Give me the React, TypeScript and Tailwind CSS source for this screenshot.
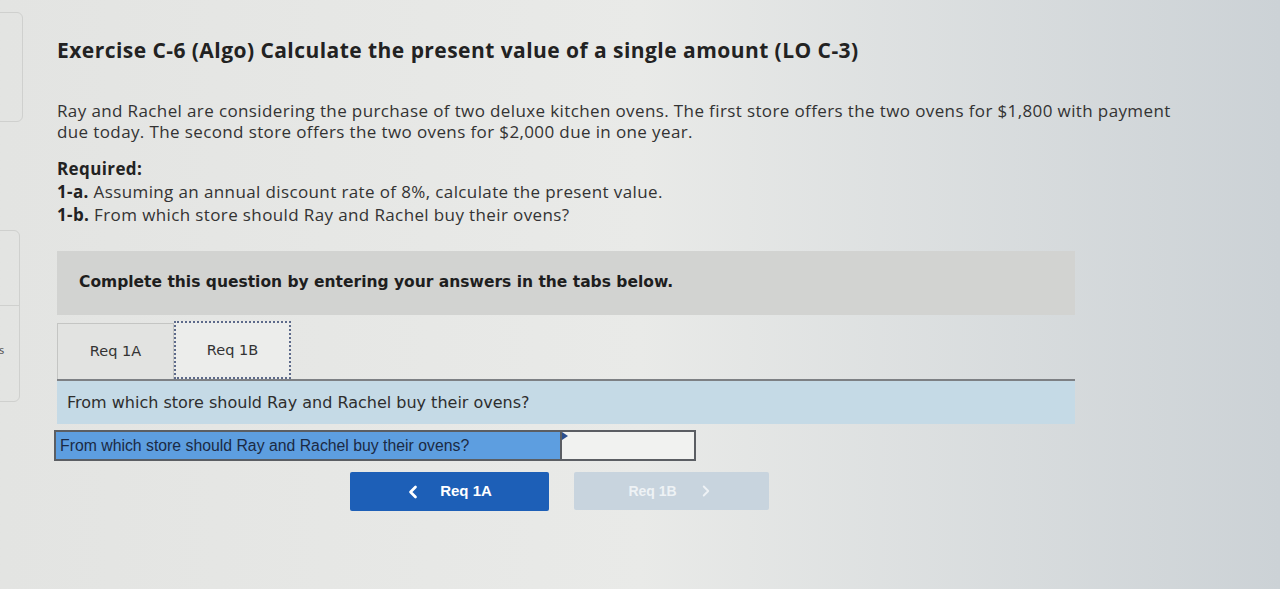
import { ChevronLeft, ChevronRight } from 'lucide-react';

export default function App() {
  const question = 'From which store should Ray and Rachel buy their ovens?';

  return (
    <div className="w-[1280px] h-[589px] overflow-hidden flex bg-gradient-to-r from-[#e3e4e2] via-[#e9eae8] to-[#ccd2d6] text-[#2b2b2b]">
      {/* Side rail (cut off at the left edge) */}
      <div className="w-[57px] shrink-0 flex flex-col">
        <div className="mt-[12px] -ml-[12px] w-[35px] h-[110px] rounded-md border border-[#cfd0ce]" />
        <div className="mt-[108px] -ml-[12px] w-[32px] h-[172px] rounded-md border border-[#cfd0ce] flex flex-col">
          <div className="h-[75px] border-b border-[#cfd0ce]" />
          <div className="flex-1 flex items-center pl-[10px] pb-[8px] text-[12px] text-[#555] font-['Lato',sans-serif]">s</div>
        </div>
      </div>

      {/* Main */}
      <div className="w-[1018px] shrink-0 flex flex-col">
        <h1 className="mt-[36px] whitespace-nowrap font-['Open_Sans',sans-serif] font-bold text-[21px] tracking-[0.45px] leading-[28px] text-[#222]">
          Exercise C-6 (Algo) Calculate the present value of a single amount (LO C-3)
        </h1>

        <p className="mt-[36px] w-[1125px] font-['Open_Sans',sans-serif] text-[17px] tracking-[0.38px] leading-[21px] text-[#333]">
          Ray and Rachel are considering the purchase of two deluxe kitchen ovens. The first store offers the two ovens for $1,800 with payment due today. The second store offers the two ovens for $2,000 due in one year.
        </p>

        <div className="mt-[15px] font-['Open_Sans',sans-serif] text-[17px] tracking-[0.38px] leading-[23px] text-[#333]">
          <div className="font-bold text-[#222]">Required:</div>
          <div>
            <span className="font-bold text-[#222]">1-a.</span> Assuming an annual discount rate of 8%, calculate the present value.
          </div>
          <div>
            <span className="font-bold text-[#222]">1-b.</span> From which store should Ray and Rachel buy their ovens?
          </div>
        </div>

        <div className="mt-[25px] h-[64px] bg-[#d2d3d1] flex items-center pl-[22px]">
          <span className="font-['DejaVu_Sans',sans-serif] font-bold text-[15.5px] text-[#1e1e1e]">
            Complete this question by entering your answers in the tabs below.
          </span>
        </div>

        {/* Tabs */}
        <div className="mt-[6px] flex items-end border-b-2 border-[#7d8084]">
          <div className="w-[117px] h-[56px] bg-[#e2e3e1] border border-b-0 border-[#c4c5c3] flex items-center justify-center font-['DejaVu_Sans',sans-serif] text-[14.5px] text-[#333]">
            Req 1A
          </div>
          <div className="w-[117px] h-[58px] bg-[#ecedeb] border-2 border-dotted border-[#5d6a8a] flex items-center justify-center pt-[2px] font-['DejaVu_Sans',sans-serif] text-[14.5px] text-[#333]">
            Req 1B
          </div>
        </div>

        <div className="h-[43px] bg-[#c5dae6] flex items-center pl-[10px] font-['DejaVu_Sans',sans-serif] text-[16px] text-[#2e2e2e]">
          {question}
        </div>

        {/* Answer row */}
        <div className="mt-[6px] -ml-[3px] w-[642px] h-[31px] flex border-2 border-[#5b5e63]">
          <div className="w-[504px] bg-[#5d9ee0] flex items-center pl-[4px] font-['Liberation_Sans',sans-serif] text-[15.8px] text-[#1b2a44]">
            {question}
          </div>
          <div className="relative flex-1 bg-[#f1f2f0] border-l-2 border-[#5b5e63]">
            <div className="absolute left-0 top-0 w-0 h-0 border-t-[4px] border-b-[4px] border-l-[6px] border-t-transparent border-b-transparent border-l-[#2a4f8f]" />
          </div>
        </div>

        {/* Nav buttons */}
        <div className="mt-[11px] ml-[293px] flex gap-[25px]">
          <button className="w-[199px] h-[39px] rounded-[2px] bg-[#1d5fb7] flex items-center justify-center gap-[17px] pr-[4px] font-['Liberation_Sans',sans-serif] font-bold text-[15px] text-white">
            <ChevronLeft size={20} strokeWidth={3.25} />
            <span>Req 1A</span>
          </button>
          <button className="w-[195px] h-[38px] rounded-[2px] bg-[#c8d4de] flex items-center justify-center gap-[20px] font-['Liberation_Sans',sans-serif] font-bold text-[14px] text-[#eef2f5]">
            <span>Req 1B</span>
            <ChevronRight size={18} strokeWidth={2.5} />
          </button>
        </div>
      </div>
    </div>
  );
}
